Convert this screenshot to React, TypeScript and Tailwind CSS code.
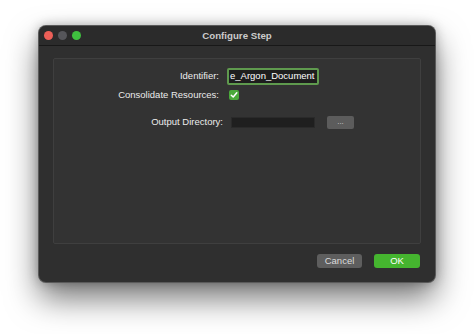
import React from "react";

export default function App() {
  const font = { fontFamily: '"Liberation Sans", Arial, sans-serif' };
  return (
    <div className="w-[474px] h-[334px] bg-white pt-[26px] pl-[39px]" style={font}>
      <div className="w-[396px] h-[256px] rounded-[7px] bg-[#2f2f2f] flex flex-col shadow-[0_16px_32px_rgba(0,0,0,0.55),0_0_12px_rgba(0,0,0,0.3)] ring-1 ring-[#5a5a5a] overflow-hidden">
        <div className="h-[20px] shrink-0 bg-[#2b2b2b] border-b border-[#181818] flex items-center relative">
          <div className="absolute left-[5px] top-[5px] flex gap-[5px]">
            <div className="w-[9px] h-[9px] rounded-full bg-[#ec5f57]" />
            <div className="w-[9px] h-[9px] rounded-full bg-[#56565a]" />
            <div className="w-[9px] h-[9px] rounded-full bg-[#3fc03f]" />
          </div>
          <div className="w-full text-center text-[9.7px] font-bold text-[#cccccc] leading-none">Configure Step</div>
        </div>
        <div className="flex-1 flex flex-col px-[14px] pt-[12px] pb-[13px]">
          <div className="h-[186px] bg-[#333333] border border-[#3f3f3f] rounded-[2px] flex flex-col pt-[9px] text-[9.5px] text-[#ebebeb]">
            <div className="flex items-center h-[17px]">
              <div className="w-[165px] text-right">Identifier:</div>
              <div className="ml-[8px] w-[92px] h-[17px] rounded-[2px] border-[2px] border-[#5f9a4e] bg-[#1e1e1e] flex items-center px-[1px] text-white text-[9.5px] overflow-hidden whitespace-nowrap">
                e_Argon_Document
              </div>
            </div>
            <div className="flex items-center h-[10px] mt-[5px]">
              <div className="w-[165px] text-right">Consolidate Resources:</div>
              <div className="ml-[10px] w-[10px] h-[10px] rounded-[2px] bg-[#4aa93a] flex items-center justify-center">
                <svg width="8" height="8" viewBox="0 0 8 8">
                  <path d="M1.3 4.2 L3.2 6 L6.8 1.8" stroke="white" strokeWidth="1.5" fill="none" strokeLinecap="round" strokeLinejoin="round" />
                </svg>
              </div>
            </div>
            <div className="flex items-center h-[13px] mt-[16px]">
              <div className="w-[169px] text-right">Output Directory:</div>
              <div className="ml-[8px] w-[84px] h-[11px] bg-[#1f1f1f] border border-[#2a2a2a]" />
              <div className="ml-[12px] w-[27px] h-[13px] rounded-[2px] bg-[#5c5c5c] flex items-center justify-center text-[#d0d0d0] text-[8px] leading-none pb-[2px]">...</div>
            </div>
          </div>
          <div className="flex justify-end mt-[10px] gap-[12px] pr-[1px]">
            <div className="w-[45px] h-[14px] rounded-[3px] bg-[#5e5e5e] text-[#dcdcdc] text-[9.5px] flex items-center justify-center leading-none">Cancel</div>
            <div className="w-[46px] h-[14px] rounded-[3px] bg-[#45b52f] text-white text-[9.5px] flex items-center justify-center leading-none">OK</div>
          </div>
        </div>
      </div>
    </div>
  );
}
